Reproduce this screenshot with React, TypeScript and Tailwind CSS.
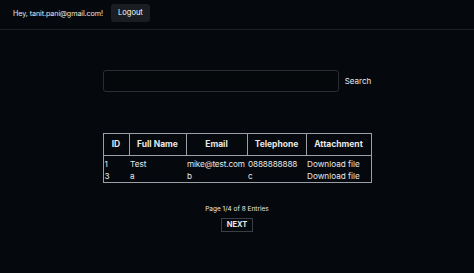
export default function App() {
  const rows = [
    { id: "1", name: "Test", email: "mike@test.com", tel: "0888888888" },
    { id: "3", name: "a", email: "b", tel: "c" },
  ];
  return (
    <div
      className="min-h-[273px] w-full bg-[#05090d] text-[#e8e8e8]"
      style={{ fontFamily: "Inter, 'Liberation Sans', sans-serif" }}
    >
      <header className="flex h-[30px] items-center gap-[8px] border-b border-[#1c2126] pl-[13px]">
        <span className="text-[7.2px] tracking-[-0.1px] text-[#e8e8e8]">Hey, tanit.pani@gmail.com!</span>
        <button className="h-[18px] w-[39px] -mt-[4px] rounded-[3px] bg-[#1a1d21] text-[7.5px] text-white">
          Logout
        </button>
      </header>
      <main className="flex flex-col items-center">
        <div className="mt-[40px] flex items-center gap-[6px]">
          <input className="h-[22px] w-[236px] rounded-[3px] border border-[#2a2e33] bg-[#05080b] outline-none" />
          <span className="text-[8px]">Search</span>
        </div>
        <table className="mt-[41px] w-[268px] table-fixed border-collapse border border-[#9aa0a6] text-[8.2px]">
          <colgroup>
            <col className="w-[26px]" />
            <col className="w-[57px]" />
            <col className="w-[61px]" />
            <col className="w-[59px]" />
            <col className="w-[65px]" />
          </colgroup>
          <thead>
            <tr className="h-[22px] text-[8.5px]">
              <th className="border border-[#9aa0a6] text-center font-bold">ID</th>
              <th className="border border-[#9aa0a6] text-center font-bold">Full Name</th>
              <th className="border border-[#9aa0a6] text-center font-bold">Email</th>
              <th className="border border-[#9aa0a6] text-center font-bold">Telephone</th>
              <th className="border border-[#9aa0a6] text-center font-bold">Attachment</th>
            </tr>
          </thead>
          <tbody>
            {rows.map((r, i) => (
              <tr key={r.id} className={i === 0 ? "h-[14px] align-bottom" : "h-[13px] align-top"}>
                <td className="px-[1px] leading-[12px]">{r.id}</td>
                <td className="px-[1px] leading-[12px]">{r.name}</td>
                <td className="px-[1px] leading-[12px] whitespace-nowrap tracking-[-0.15px]">{r.email}</td>
                <td className="px-[1px] leading-[12px] whitespace-nowrap tracking-[-0.15px]">{r.tel}</td>
                <td className="px-[1px] leading-[12px] whitespace-nowrap">Download file</td>
              </tr>
            ))}
          </tbody>
        </table>
        <div className="mt-[22px] text-[6.5px]">Page 1/4 of 8 Entries</div>
        <button className="mt-[3px] h-[14px] w-[32px] border border-[#3a3f45] text-[7.5px] font-bold">
          NEXT
        </button>
      </main>
    </div>
  );
}
